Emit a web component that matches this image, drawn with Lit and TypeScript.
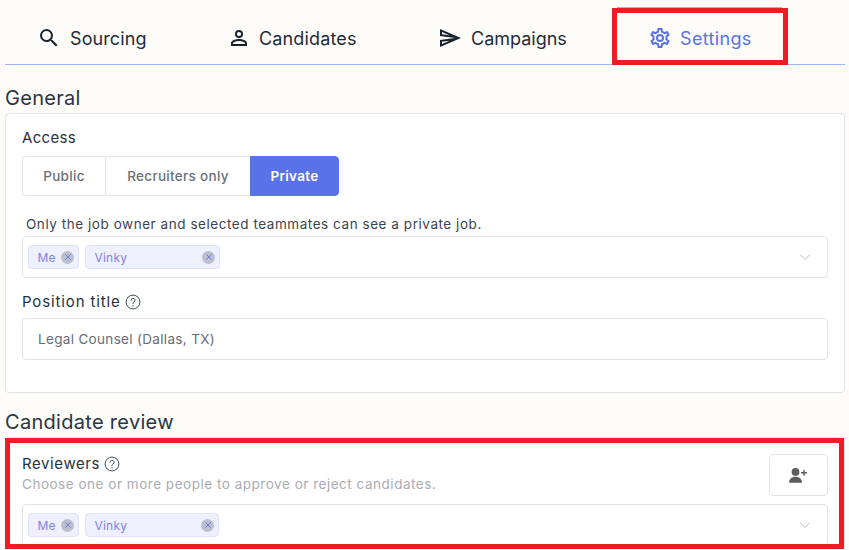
import { LitElement, html, css, svg } from "lit";
import { customElement } from "lit/decorators.js";

const help = html`<svg class="help" viewBox="0 0 16 16" fill="none" stroke="#3f4a56" stroke-width="1"><circle cx="8" cy="8" r="6.9"/><path d="M6 6.300a2 2 0 1 1 3 1.700c-.7.4-1 .8-1 1.600" stroke-linecap="round"/><circle cx="8" cy="11.700" r=".7" fill="#3f4a56" stroke="none"/></svg>`;
const chevron = html`<svg class="chev" viewBox="0 0 12 8" fill="none" stroke="#b4bcc8" stroke-width="1"><path d="M1 1.500l5 5 5-5"/></svg>`;
const x = html`<span class="x"><svg viewBox="0 0 8 8" fill="none" stroke="#6f7fe0" stroke-width="1"><path d="M1.200 1.200l5.600 5.600M6.800 1.200L1.200 6.800"/></svg></span>`;

const icons = {
  search: svg`<path d="M15.5 14h-.79l-.28-.27A6.47 6.47 0 0 0 16 9.5 6.5 6.5 0 1 0 9.5 16c1.61 0 3.09-.59 4.23-1.57l.27.28v.79l5 4.99L20.49 19l-4.99-5zm-6 0C7.01 14 5 11.99 5 9.5S7.01 5 9.5 5 14 7.01 14 9.5 11.99 14 9.5 14z"/>`,
  person: svg`<path d="M12 5.9a2.1 2.1 0 1 1 0 4.2 2.1 2.1 0 0 1 0-4.2M12 4a4 4 0 1 0 0 8 4 4 0 0 0 0-8zm0 9c-2.67 0-8 1.34-8 4v3h16v-3c0-2.66-5.33-4-8-4zm-6.1 5.1V17c0-.64 3.13-2.1 6.1-2.1s6.1 1.46 6.1 2.1v1.1H5.9z"/>`,
  send: svg`<path d="M4.01 6.03l7.51 3.22-7.52-1 .01-2.22m7.5 8.72L4 17.97v-2.22l7.51-1M2.01 3L2 10l15 2-15 2 .01 7L23 12 2.01 3z"/>`,
  gear: svg`<path d="M19.43 12.98c.04-.32.07-.64.07-.98s-.03-.66-.07-.98l2.11-1.65c.19-.15.24-.42.12-.64l-2-3.46c-.12-.22-.39-.3-.61-.22l-2.49 1c-.52-.4-1.08-.73-1.69-.98l-.38-2.65A.49.49 0 0 0 14 2h-4c-.25 0-.46.18-.49.42l-.38 2.65c-.61.25-1.17.59-1.69.98l-2.49-1c-.23-.09-.49 0-.61.22l-2 3.46c-.13.22-.07.49.12.64l2.11 1.65c-.04.32-.07.65-.07.98s.03.66.07.98l-2.11 1.65c-.19.15-.24.42-.12.64l2 3.46c.12.22.39.3.61.22l2.49-1c.52.4 1.08.73 1.69.98l.38 2.65c.03.24.24.42.49.42h4c.25 0 .46-.18.49-.42l.38-2.65c.61-.25 1.17-.59 1.69-.98l2.49 1c.23.09.49 0 .61-.22l2-3.46c.12-.22.07-.49-.12-.64l-2.11-1.65zm-1.98-1.71c.04.31.05.52.05.73s-.02.43-.05.73l-.14 1.13.89.7 1.08.84-.7 1.21-1.27-.51-1.04-.42-.9.68c-.43.32-.84.56-1.25.73l-1.06.43-.16 1.13-.2 1.35h-1.4l-.19-1.35-.16-1.13-1.06-.43c-.43-.18-.83-.41-1.23-.71l-.91-.7-1.06.43-1.27.51-.7-1.21 1.08-.84.89-.7-.14-1.13c-.03-.31-.05-.54-.05-.74s.02-.43.05-.73l.14-1.13-.89-.7-1.08-.84.7-1.21 1.27.51 1.04.42.9-.68c.43-.32.84-.56 1.25-.73l1.06-.43.16-1.13.2-1.35h1.39l.19 1.35.16 1.13 1.06.43c.43.18.83.41 1.23.71l.91.7 1.06-.43 1.27-.51.7 1.21-1.07.85-.89.7.14 1.13zM12 8a4 4 0 1 0 0 8 4 4 0 0 0 0-8zm0 6a2 2 0 1 1 0-4 2 2 0 0 1 0 4z"/>`,
};

@customElement("app-root")
export class AppRoot extends LitElement {
  static styles = css`
    :host {
      display: block;
      position: relative;
      width: 849px;
      height: 550px;
      overflow: hidden;
      background: #fdfcf9;
      font-family: Inter, "Noto Sans", sans-serif;
      color: #273240;
    }
    .wrap { padding: 0 4px 0 5px; display: flex; flex-direction: column; }
    .tabs {
      height: 65px;
      box-sizing: border-box;
      border-bottom: 1px solid #a3b3f0;
      display: grid;
      grid-template-columns: 190px 211px 191px 165px;
      padding-left: 20px;
      align-items: stretch;
    }
    .tab {
      display: flex;
      align-items: center;
      gap: 9px;
      padding: 12px 0 0 12px;
      font-size: 18px;
      color: #1f2b3a;
    }
    .tab svg { width: 24px; height: 24px; fill: #18222e; flex: none; }
    .tab.c1 { letter-spacing: 0.1px; }
    .tab.c2 { letter-spacing: 0.15px; gap: 8px; }
    .tab.c3 { letter-spacing: 0; }
    .tab.active {
      color: #5a72e8;
      letter-spacing: 0.35px;
      border-top: 1px solid #a3b3f0;
      margin-top: 7px;
      padding: 4px 0 0 31px;
      gap: 8px;
    }
    .tab.active svg { fill: #5a72e8; }
    h2 {
      margin: 0;
      font-weight: 400;
      font-size: 20px;
      letter-spacing: 0.3px;
      line-height: 24px;
      color: #2a3442;
    }
    .h-general { margin-top: 21px; height: 27px; }
    .h-review { margin-top: 17px; height: 27px; }
    .card {
      background: #fff;
      border: 1px solid #e4e4e4;
      border-radius: 4px;
      padding: 15px 16px 0;
      box-sizing: border-box;
    }
    .card.one { height: 280px; }
    .card.two { height: 120px; padding-top: 17px; }
    .label { font-size: 15px; letter-spacing: 0.3px; line-height: 18px; height: 18px; display: flex; align-items: center; gap: 4px; color: #273240; }
    .label.pos { letter-spacing: 0.87px; }
    .label.rev { letter-spacing: 0.6px; }
    .help { width: 16px; height: 16px; }
    .seg { display: flex; width: max-content; height: 40px; margin-top: 9px; font-size: 13.5px; font-weight: 500; letter-spacing: 0.3px; }
    .seg div { display: flex; align-items: center; justify-content: center; border: 1px solid #e4e4e4; color: #6b6f78; box-sizing: border-box; }
    .seg .a { width: 83px; border-radius: 4px 0 0 4px; border-right: 0; }
    .seg .b { width: 145px; border-right: 0; }
    .seg .c { width: 89px; background: #5a72e8; border-color: #5a72e8; color: #fff; border-radius: 0 4px 4px 0; font-weight: 600; }
    .note { margin: 20px 0 0 4px; font-size: 13.5px; letter-spacing: 0.55px; line-height: 16px; height: 16px; color: #3a4450; }
    .select {
      margin-top: 4px;
      height: 42px;
      box-sizing: border-box;
      border: 1px solid #e4e4e4;
      border-radius: 4px;
      display: flex;
      align-items: center;
      gap: 6px;
      padding: 0 5px;
      position: relative;
    }
    .chip {
      height: 24px;
      box-sizing: border-box;
      background: #eef0fd;
      border: 1px solid #dfe3fb;
      border-radius: 4px;
      display: flex;
      align-items: center;
      justify-content: space-between;
      padding: 0 4px 0 8.5px;
      font-size: 12px;
      letter-spacing: 0.2px;
      color: #7d82ea;
    }
    .chip.me { width: 51px; }
    .x { width: 13px; height: 13px; border-radius: 50%; background: #bcc0cc; display: flex; align-items: center; justify-content: center; }
    .x svg { width: 8px; height: 8px; }
    .chev { width: 12px; height: 8px; margin-left: auto; margin-right: 11px; }
    .pos { margin-top: 15px; }
    .input {
      margin-top: 7px;
      height: 42px;
      box-sizing: border-box;
      border: 1px solid #e4e4e4;
      border-radius: 4px;
      display: flex;
      align-items: center;
      padding-left: 15px;
      font-size: 13.5px;
      letter-spacing: 0.33px;
      color: #666c75;
    }
    .rev-head { display: flex; justify-content: space-between; align-items: flex-start; height: 49px; }
    .sub { font-size: 13.5px; letter-spacing: 0.52px; line-height: 16px; color: #a9adb3; margin-top: 3px; }
    .add {
      width: 59px; height: 42px; margin-top: -1px;
      box-sizing: border-box;
      border: 1px solid #e4e4e4;
      border-radius: 4px;
      display: flex; align-items: center; justify-content: center;
    }
    .add svg { width: 18px; height: 15px; fill: #5d5d5d; margin-left: -1px; }
    .rev-select { margin-top: 0; }
    .frame { position: absolute; border: 5px solid #ee1c25; box-sizing: border-box; pointer-events: none; }
    .f1 { left: 612px; top: 8px; width: 176px; height: 57px; }
    .f2 { left: 5px; top: 438px; width: 839px; height: 111px; }
  `;

  render() {
    const tab = (n: keyof typeof icons, t: string, c: string) =>
      html`<div class="tab ${c}"><svg viewBox="0 0 24 24">${icons[n]}</svg><span>${t}</span></div>`;
    const chips = (w: string) => html`<div class="chip me"><span>Me</span>${x}</div><div class="chip vinky" style="width:${w}"><span>Vinky</span>${x}</div>${chevron}`;
    return html`
      <div class="wrap">
        <div class="tabs">
          ${tab("search", "Sourcing", "c1")}
          ${tab("person", "Candidates", "c2")}
          ${tab("send", "Campaigns", "c3")}
          ${tab("gear", "Settings", "active")}
        </div>
        <h2 class="h-general">General</h2>
        <div class="card one">
          <div class="label">Access</div>
          <div class="seg"><div class="a">Public</div><div class="b">Recruiters only</div><div class="c">Private</div></div>
          <div class="note">Only the job owner and selected teammates can see a private job.</div>
          <div class="select">${chips("135px")}</div>
          <div class="label pos">Position title ${help}</div>
          <div class="input">Legal Counsel (Dallas, TX)</div>
        </div>
        <h2 class="h-review">Candidate review</h2>
        <div class="card two">
          <div class="rev-head">
            <div>
              <div class="label rev">Reviewers ${help}</div>
              <div class="sub">Choose one or more people to approve or reject candidates.</div>
            </div>
            <div class="add"><svg viewBox="0 0 18 15"><circle cx="6.5" cy="3.900" r="3.900"/><path d="M0 14.800c.2-3.900 2.600-6 6.500-6s6.300 2.100 6.500 6z"/><path d="M14.300 1.700h1.400v2.300H18v1.400h-2.300v2.300h-1.400V5.400H12V4h2.300z"/></svg></div>
          </div>
          <div class="select rev-select">${chips("134px")}</div>
        </div>
      </div>
      <div class="frame f1"></div>
      <div class="frame f2"></div>
    `;
  }
}
